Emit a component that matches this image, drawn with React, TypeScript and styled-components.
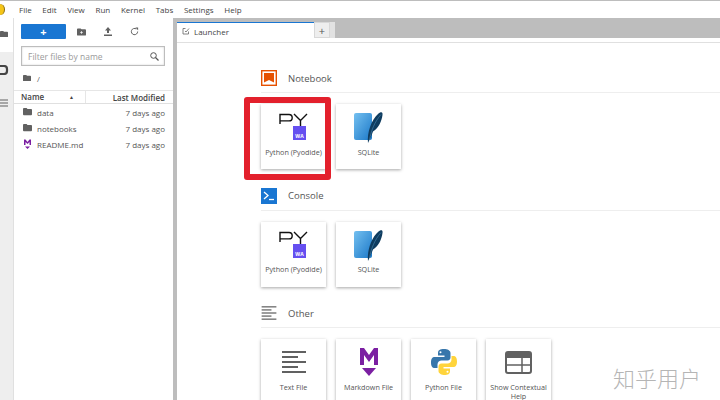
import React from "react";
import styled, { createGlobalStyle } from "styled-components";

const Global = createGlobalStyle`
  html, body { margin: 0; padding: 0; background: #fff; }
  #root { width: 720px; height: 400px; overflow: hidden; }
  * { box-sizing: border-box; }
`;
const Page = styled.div`
  width: 720px; height: 400px; display: flex; flex-direction: column; position: relative; overflow: hidden;
  font-family: "Open Sans", "Noto Sans", sans-serif; color: #444; background: #fff; border-top: 1px solid #bdbdbd;
`;
const MenuBar = styled.div`
  height: 17px; display: flex; align-items: center; padding-left: 19px; gap: 10.7px; font-size: 8px; color: #444; flex: none;
  position: relative;
`;
const Logo = styled.div`
  position: absolute; left: -5px; top: 3px; width: 10px; height: 11px; border-radius: 50%; background: #f5c518; border-right: 1px solid #8a6d10;
`;
const Body = styled.div`display: flex; flex: 1; min-height: 0;`;
const Rail = styled.div`
  width: 14px; flex: none; background: #fff; display: flex; flex-direction: column; align-items: flex-start; border-right: 1px solid #e0e0e0;
`;
const RailTop = styled.div`height: 34px; padding-top: 13px; flex: none; line-height: 0;`;
const RailRest = styled.div`flex: 1; background: #eeeeee; padding-top: 13px; width: 13px; display: flex; flex-direction: column; gap: 24px;`;
const Browser = styled.div`width: 159px; flex: none; background: #fff; display: flex; flex-direction: column;`;
const Toolbar = styled.div`display: flex; align-items: center; padding: 5px 0 0 7px; height: 22px;`;
const NewButton = styled.div`
  width: 45px; height: 15px; background: #1976d2; color: #fff; font-size: 11px; font-weight: 700; border-radius: 1px;
  display: flex; align-items: center; justify-content: center; line-height: 1;
`;
const ToolIcons = styled.div`display: flex; align-items: center; gap: 18px; margin-left: 11px; color: #616161;`;
const Filter = styled.div`
  margin: 6px 8px 0 7px; height: 20px; border: 1px solid #bdbdbd; box-shadow: inset 0 0 2px rgba(0,0,0,.2);
  display: flex; align-items: center; justify-content: space-between; padding: 0 5px 0 6px; font-size: 8.5px; color: #9a9a9a;
`;
const Crumb = styled.div`display: flex; align-items: center; gap: 6px; height: 24px; padding-left: 9px; font-size: 8px; color: #616161;`;
const Header = styled.div`
  display: flex; height: 14px; align-items: center; font-size: 8px; font-weight: 600; color: #444;
  border-top: 1px solid #e6e6e6; border-bottom: 1px solid #e0e0e0;
`;
const NameCol = styled.div`
  width: 72px; padding-left: 7px; display: flex; justify-content: space-between; padding-right: 11px; border-right: 1px solid #e6e6e6; line-height: 12px; flex: none;
`;
const SortArrow = styled.span`font-size: 5px;`;
const ModCol = styled.div`flex: 1; text-align: right; padding-right: 8px;`;
const Row = styled.div`
  height: 16px; display: flex; align-items: center; padding: 0 8px 0 9px; font-size: 8px; color: #555; gap: 5px;
`;
const RowName = styled.span`flex: 1;`;
const Splitter = styled.div`width: 4px; flex: none; background: #bdbdbd;`;
const Main = styled.div`flex: 1; min-width: 0; display: flex; flex-direction: column;`;
const TabBar = styled.div`
  height: 25px; flex: none; background: #fff; display: flex; align-items: flex-start; border-top: 4px solid #bdbdbd;
`;
const Tab = styled.div`
  width: 137px; height: 21px; border-top: 1px solid #1976d2; display: flex; align-items: center; gap: 4px; padding: 0 0 3px 5px;
  font-size: 8px; color: #444; background: #fff; border-bottom: 1px solid #e0e0e0;
`;
const AddTab = styled.div`
  width: 16px; height: 16px; background: #eeeeee; border: 1px solid #d8d8d8; color: #555;
  font-size: 11px; display: flex; align-items: center; justify-content: center; line-height: 1; flex: none;
`;
const TabFill = styled.div`flex: 1; height: 16px; background: #bdbdbd; border-left: 5px solid #e2e2e2;`;
const TabRule = styled.div`height: 1px; flex: none; background: #e0e0e0; margin-top: -1px;`;
const Launcher = styled.div`flex: 1; padding: 17px 0 0 84px; position: relative;`;
const Section = styled.div`margin-bottom: 8.5px;`;
const SectionHead = styled.div`
  height: 33px; width: 460px; display: flex; align-items: center; gap: 11px; font-size: 9.500px; color: #555;
  border-bottom: 1px solid #eeeeee; padding-top: 4px;
`;
const Cards = styled.div`display: flex; gap: 10px; padding-top: 11px;`;
const Card = styled.div`
  width: 65px; height: 65px; background: #fff; box-shadow: 0 1px 3px rgba(0,0,0,.35); display: flex; flex-direction: column; align-items: center;
  font-size: 7.200px; color: #555; text-align: center; line-height: 9px;
`;
const CardIcon = styled.div`height: 41.5px; width: 100%; display: flex; align-items: center; justify-content: center; flex: none; padding-top: 5px;`;
const CardLabel = styled.div`padding-top: 2px;`;
const Highlight = styled.div`
  position: absolute; left: 67px; top: 54px; width: 87px; height: 83px; border: 6px solid #e3202c; border-radius: 3px; pointer-events: none;
`;
const Watermark = styled.div`
  position: absolute; right: 19px; top: 360px; font-size: 22px; color: #b5b5b5; font-family: "Noto Sans CJK SC", sans-serif;
  text-shadow: 0 0 2px #fff; font-weight: 300;
`;

const Folder = ({ c = "#616161", w = 9 }: { c?: string; w?: number }) => (
  <svg width={w} height={w * 0.8} viewBox="0 0 10 8"><path d="M0 1a1 1 0 0 1 1-1h3l1 1h4a1 1 0 0 1 1 1v5a1 1 0 0 1-1 1H1a1 1 0 0 1-1-1z" fill={c} /></svg>
);
const PyWa = () => (
  <svg width="30" height="28" viewBox="0 0 30 28">
    <path d="M1 11V1.500h9a3.200 3.200 0 0 1 0 6.400H1" fill="none" stroke="#111" strokeWidth="1.400" />
    <path d="M15 1l6.500 6.500L28 1M21.500 7.500V14" fill="none" stroke="#111" strokeWidth="1.400" />
    <rect x="14" y="13" width="13" height="14" fill="#654ff0" />
    <text x="20.500" y="24.500" fontSize="5" fontWeight="700" fill="#fff" textAnchor="middle" fontFamily="Open Sans">WA</text>
  </svg>
);
const Sqlite = ({ id }: { id: string }) => (
  <svg width="30" height="32" viewBox="0 0 30 32">
    <defs>
      <linearGradient id={id} x1="0" y1="0" x2="1" y2="1">
        <stop offset="0" stopColor="#74c0f0" />
        <stop offset="1" stopColor="#1b78c8" />
      </linearGradient>
    </defs>
    <rect x="0" y="2" width="18" height="27" rx="2" fill={`url(#${id})`} />
    <path d="M14 32C13 22 17 9 24.500 2.500c2.500-2 4.500-2 4 1.500-1 6.500-3.500 12.500-9.500 16.500-1.500 4-3 7.500-5 11.500z" fill="#0f3c5f" />
    <path d="M15.500 29C17 20 20.500 11 27 3.500" fill="none" stroke="#4a86b0" strokeWidth=".6" />
  </svg>
);
const Lines = ({ w = 26, c = "#616161" }: { w?: number; c?: string }) => (
  <svg width={w} height={w} viewBox="0 0 26 26">
    {[[2, 24], [7, 16], [12, 24], [17, 16], [22, 24]].map(([y, l]) => (
      <rect key={y} x="1" y={y} width={l} height="2" fill={c} />
    ))}
  </svg>
);

const KernelCards = ({ prefix }: { prefix: string }) => (
  <Cards>
    <Card><CardIcon><PyWa /></CardIcon><CardLabel>Python (Pyodide)</CardLabel></Card>
    <Card><CardIcon><Sqlite id={`${prefix}-sq`} /></CardIcon><CardLabel>SQLite</CardLabel></Card>
  </Cards>
);

export default function App() {
  return (
    <Page>
      <Global />
      <MenuBar>
        <Logo />
        {["File", "Edit", "View", "Run", "Kernel", "Tabs", "Settings", "Help"].map((m) => <span key={m}>{m}</span>)}
      </MenuBar>
      <Body>
        <Rail>
          <RailTop><Folder w={8} /></RailTop>
          <RailRest>
            <svg width="9" height="10" viewBox="0 0 9 10"><rect x="-3" y="1" width="10" height="8" rx="3" fill="none" stroke="#444" strokeWidth="2.200" /></svg>
            <svg width="8" height="8" viewBox="0 0 8 8"><path d="M0 1h8M0 4h8M0 7h8" stroke="#616161" strokeWidth="1" /></svg>
          </RailRest>
        </Rail>
        <Browser>
          <Toolbar>
            <NewButton>+</NewButton>
            <ToolIcons>
              <svg width="9" height="8" viewBox="0 0 10 8"><path d="M0 1a1 1 0 0 1 1-1h3l1 1h4a1 1 0 0 1 1 1v5a1 1 0 0 1-1 1H1a1 1 0 0 1-1-1z" fill="#616161" /><path d="M5 3v3M3.500 4.500h3" stroke="#fff" strokeWidth=".8" /></svg>
              <svg width="8" height="9" viewBox="0 0 8 9"><path d="M4 0l3 3.500H5V6H3V3.500H1zM0 7.500h8V9H0z" fill="#616161" /></svg>
              <svg width="9" height="9" viewBox="0 0 10 10"><path d="M8.500 5A3.500 3.500 0 1 1 7 2.200" fill="none" stroke="#616161" strokeWidth="1.100" /><path d="M6 0.500l3 0v3z" fill="#616161" /></svg>
            </ToolIcons>
          </Toolbar>
          <Filter>
            <span>Filter files by name</span>
            <svg width="9" height="9" viewBox="0 0 9 9"><circle cx="3.500" cy="3.500" r="2.800" fill="none" stroke="#555" /><path d="M5.500 5.500L8.500 8.500" stroke="#555" strokeWidth="1.200" /></svg>
          </Filter>
          <Crumb><Folder w={8} /><span>/</span></Crumb>
          <Header>
            <NameCol><span>Name</span><SortArrow>▲</SortArrow></NameCol>
            <ModCol>Last Modified</ModCol>
          </Header>
          <Row><Folder /><RowName>data</RowName><span>7 days ago</span></Row>
          <Row><Folder /><RowName>notebooks</RowName><span>7 days ago</span></Row>
          <Row>
            <svg width="9" height="11" viewBox="0 0 9 11"><path d="M1 6V.5h1.500L4.500 3 6.500.5H8V6H6.500V3L4.500 5 2.500 3v3zM2 7.500h5L4.500 10z" fill="#7b1fa2" /></svg>
            <RowName>README.md</RowName><span>7 days ago</span>
          </Row>
        </Browser>
        <Splitter />
        <Main>
          <TabBar>
            <Tab>
              <svg width="8" height="8" viewBox="0 0 8 8"><path d="M6.500 4.500V7H1V1.500h2.500" fill="none" stroke="#666" strokeWidth=".8" /><path d="M3 4l1 1 3-3.500" fill="none" stroke="#666" strokeWidth=".8" /></svg>
              Launcher
            </Tab>
            <AddTab>+</AddTab>
            <TabFill />
          </TabBar>
          <TabRule />
          <Launcher>
            <Section>
              <SectionHead>
                <svg width="16" height="16" viewBox="0 0 16 16"><rect x=".7" y=".7" width="14.600" height="14.600" fill="none" stroke="#e65100" strokeWidth="1.400" /><path d="M3 3h10v9.500L8 10l-5 2.500z" fill="#e65100" /></svg>
                Notebook
              </SectionHead>
              <KernelCards prefix="nb" />
            </Section>
            <Section>
              <SectionHead>
                <svg width="16" height="16" viewBox="0 0 16 16"><rect width="16" height="16" fill="#1976d2" /><path d="M3 4l4 3.500L3 11" fill="none" stroke="#fff" strokeWidth="1.300" /><path d="M8 11.500h5" stroke="#fff" strokeWidth="1.300" /></svg>
                Console
              </SectionHead>
              <KernelCards prefix="con" />
            </Section>
            <Section>
              <SectionHead><Lines w={16} />Other</SectionHead>
              <Cards>
                <Card><CardIcon><Lines /></CardIcon><CardLabel>Text File</CardLabel></Card>
                <Card>
                  <CardIcon><svg width="20" height="30" viewBox="0 0 20 30"><path d="M1 18V1h4l5 7 5-7h4v17h-4V8l-5 7-5-7v10zM3 21h14l-7 8z" fill="#7b1fa2" /></svg></CardIcon>
                  <CardLabel>Markdown File</CardLabel>
                </Card>
                <Card>
                  <CardIcon><svg width="28" height="28" viewBox="0 0 28 28"><path d="M14 1c-4 0-6 1-6 4v2.500h6.500V9H5c-3 0-4 2-4 5.500S2 20 5 20h2.500v-3.500c0-2.500 2-4 4-4h6c2 0 3-1.500 3-3V5c0-2.500-3-4-6.500-4z" fill="#3776ab" /><path d="M14 27c4 0 6-1 6-4v-2.500h-6.500V19H23c3 0 4-2 4-5.500S26 8 23 8h-1.500v3.500c0 2.500-2 4-4 4h-6c-2 0-3 1.500-3 3V23c0 2.500 3 4 6.500 4z" fill="#ffd43b" /><circle cx="10.500" cy="4.300" r="1" fill="#fff" /><circle cx="17.500" cy="23.700" r="1" fill="#fff" /></svg></CardIcon>
                  <CardLabel>Python File</CardLabel>
                </Card>
                <Card>
                  <CardIcon><svg width="27" height="23" viewBox="0 0 27 23"><rect x="1" y="1" width="25" height="21" rx="2" fill="none" stroke="#616161" strokeWidth="2" /><rect x="1" y="1" width="25" height="6" fill="#616161" /><path d="M1 14h25M17 7v15" stroke="#616161" strokeWidth="1.500" /></svg></CardIcon>
                  <CardLabel>Show Contextual Help</CardLabel>
                </Card>
              </Cards>
            </Section>
            <Highlight />
          </Launcher>
        </Main>
      </Body>
      <Watermark>知乎用户</Watermark>
    </Page>
  );
}
